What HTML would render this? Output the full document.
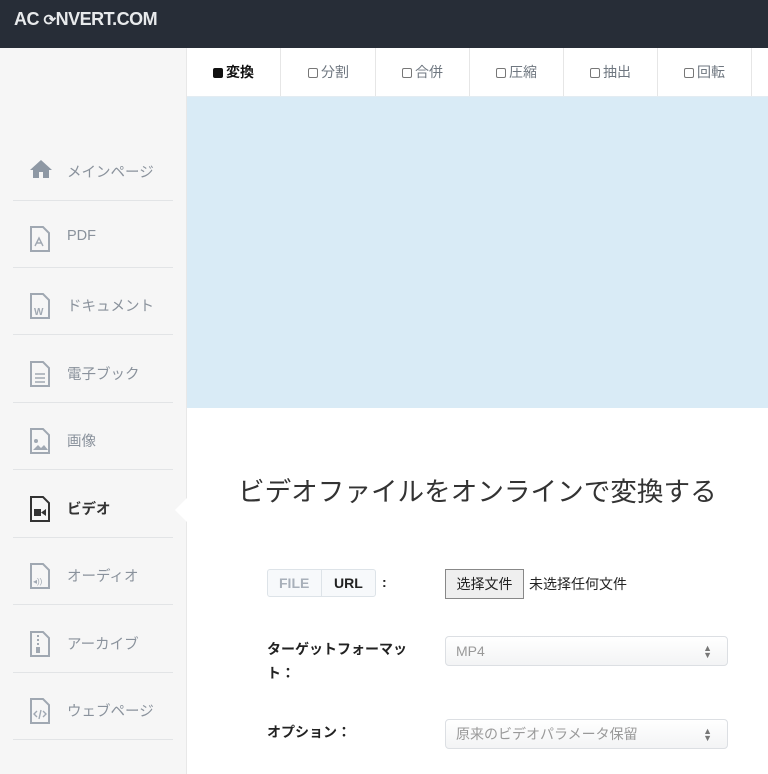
<!DOCTYPE html>
<html><head><meta charset="utf-8"><style>
*{box-sizing:border-box;margin:0;padding:0}
body{width:768px;height:774px;overflow:hidden;background:#fff;font-family:"Liberation Sans","Noto Sans CJK JP",sans-serif;position:relative}
.hdr{position:absolute;left:0;top:0;width:768px;height:48px;background:#272d37}
.logo{position:absolute;left:14px;top:9px;color:#e8eaec;font-weight:bold;font-size:18px;letter-spacing:-0.5px}
.side{position:absolute;left:0;top:48px;width:187px;height:726px;background:#f6f6f6;border-right:1px solid #e8e8e8}
.item{position:absolute;left:13px;width:160px;height:67px;border-bottom:1px solid #e2e4e6}
.item svg{position:absolute;left:16px;top:25px}
.item span{position:absolute;left:54px;top:27px;font-size:14.5px;color:#8a929c}
.item.act span{color:#333;font-weight:bold}
.arrow{position:absolute;left:175px;top:498px;width:0;height:0;border-top:12px solid transparent;border-bottom:12px solid transparent;border-right:12px solid #fff}
.tabs{position:absolute;left:187px;top:48px;height:48px;width:581px}
.tab{position:absolute;top:0;height:48px;width:94px;border-right:1px solid #e6e6e6;font-size:14px;color:#6f7780;text-align:center;line-height:48px}
.tab b{display:inline-block;width:10px;height:10px;border:1px solid #777;border-radius:2px;margin-right:3px;vertical-align:-1px}
.tab.on{color:#111;font-weight:bold}
.tab.on b{background:#111;border-color:#111}
.blue{position:absolute;left:187px;top:96px;width:581px;height:312px;background:#d9ebf6;border-top:1px solid #e3ecf2}
h1{position:absolute;left:238px;top:470px;font-size:26.6px;font-weight:normal;color:#333;white-space:nowrap}
.lbl{position:absolute;font-size:14px;font-weight:bold;color:#222}
.seg{position:absolute;left:267px;top:569px;width:109px;height:28px;border:1px solid #dde3e8;border-radius:3px;background:#f7f9fb;font-size:14px;font-weight:bold}
.seg span{position:absolute;top:5px}
.fb{position:absolute;left:445px;top:569px;width:79px;height:30px;border:1px solid #888;background:#efefef;font-size:14px;line-height:28px;text-align:center;color:#222}
.sel{position:absolute;left:445px;width:283px;height:30px;border:1px solid #dcdfe3;border-radius:4px;background:linear-gradient(#fff,#f3f4f5);font-size:14px;color:#999;line-height:28px;padding-left:10px}
.sel i{position:absolute;right:15px;top:0;font-style:normal;font-size:9px;line-height:7px;color:#777;padding-top:8px}
</style></head><body>
<div class="hdr"><div class="logo">AC <span style="font-size:15px">⟳</span>NVERT.COM</div></div>
<div class="side">
<div class="item" style="top:86px"><svg width="24" height="20" viewBox="0 0 24 20"><path d="M12 1L1 11h3v8h6v-6h4v6h6v-8h3z" fill="#8e98a4"/></svg><span>メインページ</span></div>
<div class="item" style="top:153px"><svg width="22" height="26" viewBox="0 0 22 26"><path d="M2 1h12l6 6v18H2z" fill="none" stroke="#a0a8b2" stroke-width="2"/><path d="M6 20l4-8 4 8M8 17h5" fill="none" stroke="#a0a8b2" stroke-width="1.4"/></svg><span>PDF</span></div>
<div class="item" style="top:220px"><svg width="22" height="26" viewBox="0 0 22 26"><path d="M2 1h12l6 6v18H2z" fill="none" stroke="#a0a8b2" stroke-width="2"/><text x="5" y="22" font-size="10" font-weight="bold" fill="#a0a8b2" font-family="Liberation Sans">W</text></svg><span>ドキュメント</span></div>
<div class="item" style="top:288px"><svg width="22" height="26" viewBox="0 0 22 26"><path d="M2 1h12l6 6v18H2z" fill="none" stroke="#a0a8b2" stroke-width="2"/><path d="M6 13h10M6 17h10M6 21h10" stroke="#a0a8b2" stroke-width="1.5"/></svg><span>電子ブック</span></div>
<div class="item" style="top:355px"><svg width="22" height="26" viewBox="0 0 22 26"><path d="M2 1h12l6 6v18H2z" fill="none" stroke="#a0a8b2" stroke-width="2"/><circle cx="7" cy="13" r="2" fill="#a0a8b2"/><path d="M4 22l5-5 3 3 3-3 4 5z" fill="#a0a8b2"/></svg><span>画像</span></div>
<div class="item act" style="top:423px"><svg width="22" height="26" viewBox="0 0 22 26"><path d="M2 1h12l6 6v18H2z" fill="none" stroke="#333" stroke-width="2"/><rect x="5" y="13" width="7" height="7" fill="#333"/><path d="M12 16.5l5-3.5v7z" fill="#333"/></svg><span>ビデオ</span></div>
<div class="item" style="top:490px"><svg width="22" height="26" viewBox="0 0 22 26"><path d="M2 1h12l6 6v18H2z" fill="none" stroke="#a0a8b2" stroke-width="2"/><text x="4" y="21" font-size="8" fill="#a0a8b2" font-family="Liberation Sans">◂))</text></svg><span>オーディオ</span></div>
<div class="item" style="top:558px"><svg width="22" height="26" viewBox="0 0 22 26"><path d="M2 1h12l6 6v18H2z" fill="none" stroke="#a0a8b2" stroke-width="2"/><path d="M9 4v10" stroke="#a0a8b2" stroke-width="2" stroke-dasharray="2 2"/><path d="M7 16h4v6H7z" fill="#a0a8b2"/></svg><span>アーカイブ</span></div>
<div class="item" style="top:625px"><svg width="22" height="26" viewBox="0 0 22 26"><path d="M2 1h12l6 6v18H2z" fill="none" stroke="#a0a8b2" stroke-width="2"/><path d="M8 13l-3 3 3 3M14 13l3 3-3 3M12 12l-2 9" fill="none" stroke="#a0a8b2" stroke-width="1.4"/></svg><span>ウェブページ</span></div>
</div>
<div class="arrow"></div>
<div class="tabs">
<div class="tab on" style="left:0"><b></b>変換</div>
<div class="tab" style="left:95px"><b></b>分割</div>
<div class="tab" style="left:189px"><b></b>合併</div>
<div class="tab" style="left:283px"><b></b>圧縮</div>
<div class="tab" style="left:377px"><b></b>抽出</div>
<div class="tab" style="left:471px"><b></b>回転</div>
</div>
<div class="blue"></div>
<h1>ビデオファイルをオンラインで変換する</h1>
<div class="seg"><span style="left:11px;color:#a8b0ba">FILE</span><span style="left:53px;width:1px;top:0;height:26px;background:#dde3e8"></span><span style="left:66px;color:#222">URL</span></div>
<div class="lbl" style="left:382px;top:574px">:</div>
<div class="fb">选择文件</div>
<div style="position:absolute;left:529px;top:574px;font-size:14px;color:#222">未选择任何文件</div>
<div class="lbl" style="left:267px;top:637px;line-height:24px">ターゲットフォーマッ<br>ト：</div>
<div class="sel" style="top:636px">MP4<i>▲<br>▼</i></div>
<div class="lbl" style="left:267px;top:722px">オプション：</div>
<div class="sel" style="top:719px">原来のビデオパラメータ保留<i>▲<br>▼</i></div>
</body></html>
